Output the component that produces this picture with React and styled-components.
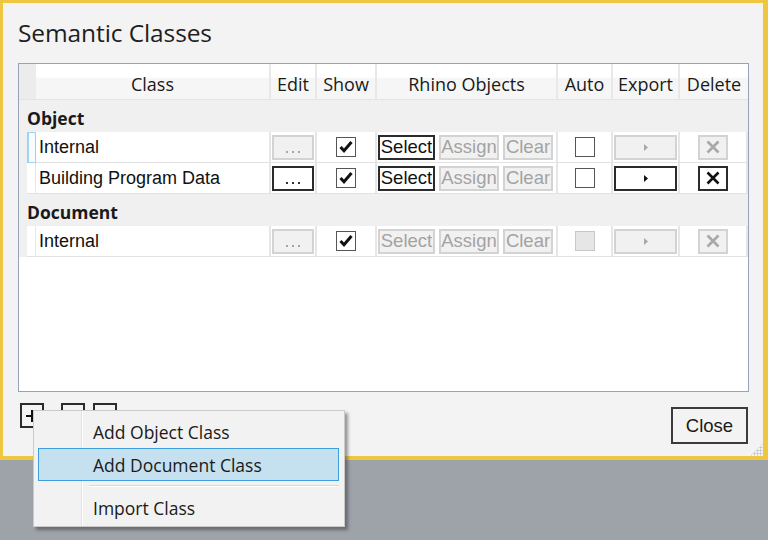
import React from "react"
import styled, { createGlobalStyle, css } from "styled-components"

const GlobalStyle = createGlobalStyle`
  html, body {
    margin: 0;
    padding: 0;
    background: #9ea3aa;
  }
  * {
    box-sizing: border-box;
  }
`

const COLS = "17px 235px 46px 60px 181px 55px 67px 68px"
const ROW_COLS = "8px 9px 235px 46px 60px 181px 55px 67px 68px"

const uiFont = `"Open Sans", "Noto Sans", sans-serif`
const cellFont = `"Liberation Sans", Arial, sans-serif`

const classes = {
  object: [
    { name: "Internal", enabled: false, current: true },
    { name: "Building Program Data", enabled: true },
  ],
  document: [{ name: "Internal", enabled: false, document: true }],
}

const CheckIcon = () => (
  <svg width="16" height="16" viewBox="0 0 16 16">
    <polyline points="2.5,8 6,11.8 13.5,3" fill="none" stroke="#111" strokeWidth="3" strokeLinejoin="miter" />
  </svg>
)

const CrossIcon = ({ color }) => (
  <svg width="14" height="14" viewBox="0 0 14 14">
    <path d="M1.5 1.5 L12.5 12.5 M12.5 1.5 L1.5 12.5" stroke={color} strokeWidth="2.6" />
  </svg>
)

const ArrowIcon = ({ color }) => (
  <svg width="6" height="9" viewBox="0 0 6 9">
    <polygon points="1,1 5,4.5 1,8" fill={color} />
  </svg>
)

const DotsIcon = ({ color }) => (
  <svg width="14" height="3" viewBox="0 0 14 3">
    <rect x="0" y="0" width="2" height="2" fill={color} />
    <rect x="6" y="0" width="2" height="2" fill={color} />
    <rect x="12" y="0" width="2" height="2" fill={color} />
  </svg>
)

const PlusIcon = () => (
  <svg width="16" height="16" viewBox="0 0 16 16">
    <path d="M8 2 V14 M2 8 H14" stroke="#111" strokeWidth="2" />
  </svg>
)

const ClassRow = ({ item }) => {
  const on = item.enabled
  const ink = on ? "#111" : "#a8a8a8"
  return (
    <DataRow>
      <Indent />
      <RowHeader $current={item.current} />
      <NameCell>{item.name}</NameCell>
      <Cell $center>
        <CellButton $on={on} $w={42}>
          <DotsSlot>
            <DotsIcon color={on ? "#333" : "#a6a6a6"} />
          </DotsSlot>
        </CellButton>
      </Cell>
      <Cell $center>
        <CheckBox>
          <CheckIcon />
        </CheckBox>
      </Cell>
      <RhinoCell>
        <CellButton $on={!item.document} $w={57}>Select</CellButton>
        <CellButton $w={60}>Assign</CellButton>
        <CellButton $w={50}>Clear</CellButton>
      </RhinoCell>
      <Cell $center>
        <CheckBox $disabled={item.document} />
      </Cell>
      <Cell $center>
        <CellButton $on={on} $w={63}>
          <ArrowIcon color={ink} />
        </CellButton>
      </Cell>
      <Cell $center>
        <CellButton $on={on} $w={30}>
          <CrossIcon color={ink} />
        </CellButton>
      </Cell>
    </DataRow>
  )
}

export default function App() {
  return (
    <Page>
      <GlobalStyle />
      <Dialog>
        <Title>Semantic Classes</Title>
        <Grid>
          <HeaderRow>
            <HeaderCorner />
            <HeaderCell>Class</HeaderCell>
            <HeaderCell>Edit</HeaderCell>
            <HeaderCell>Show</HeaderCell>
            <HeaderCell>Rhino Objects</HeaderCell>
            <HeaderCell>Auto</HeaderCell>
            <HeaderCell>Export</HeaderCell>
            <HeaderCell $last>Delete</HeaderCell>
          </HeaderRow>
          <GroupRow>Object</GroupRow>
          {classes.object.map((item, i) => (
            <ClassRow key={"o" + i} item={item} />
          ))}
          <GroupRow>Document</GroupRow>
          {classes.document.map((item, i) => (
            <ClassRow key={"d" + i} item={item} />
          ))}
        </Grid>
        <Footer>
          <ToolBar>
            <ToolButton>
              <PlusIcon />
            </ToolButton>
            <ToolButton $gap={17} />
            <ToolButton $gap={8} />
          </ToolBar>
          <CloseButton>Close</CloseButton>
        </Footer>
        <Grip />
        <Menu>
          <MenuItem>Add Object Class</MenuItem>
          <MenuItem $active>Add Document Class</MenuItem>
          <Separator />
          <MenuItem>Import Class</MenuItem>
        </Menu>
      </Dialog>
    </Page>
  )
}

const Page = styled.div`
  width: 768px;
  height: 540px;
  background: #9ea3aa;
  overflow: hidden;
`

const Dialog = styled.div`
  position: relative;
  height: 460px;
  background: #f3f3f3;
  border: 3px solid #efc63f;
  border-right-width: 5px;
  border-bottom-width: 4px;
  padding: 0 0 0 15px;
  display: flex;
  flex-direction: column;
`

const Title = styled.div`
  font-family: ${uiFont};
  font-size: 24.5px;
  letter-spacing: -0.1px;
  color: #1e1e1e;
  height: 60px;
  padding-top: 14px;
  line-height: 32px;
`

const Grid = styled.div`
  width: 731px;
  height: 329px;
  border: 1px solid #95a3b4;
  background: #ffffff;
  display: flex;
  flex-direction: column;
`

const HeaderRow = styled.div`
  display: grid;
  grid-template-columns: ${COLS};
  height: 36px;
  background: linear-gradient(#ffffff 0%, #ffffff 38%, #f6f6f6 40%, #f6f6f6 100%);
  border-bottom: 1px solid #e4e4e4;
`

const HeaderCorner = styled.div`
  background: #ececec;
`

const HeaderCell = styled.div`
  font-family: ${uiFont};
  font-size: 18px;
  color: #1a1a1a;
  display: flex;
  align-items: center;
  justify-content: center;
  border-right: ${(p) => (p.$last ? "none" : "2px solid #e8e8e8")};
  padding-top: 4px;
`

const GroupRow = styled.div`
  height: 32px;
  background: #f0f0f0;
  font-family: ${uiFont};
  font-weight: 700;
  font-size: 17.5px;
  color: #1a1a1a;
  display: flex;
  align-items: center;
  padding: 3px 0 0 8px;
`

const DataRow = styled.div`
  display: grid;
  grid-template-columns: ${ROW_COLS};
  height: 31px;
`

const Indent = styled.div`
  background: #f0f0f0;
`

const RowHeader = styled.div`
  background: #ffffff;
  border-bottom: 1px solid #e2e2e2;
  border-right: 1px solid #e6e6e6;
  ${(p) =>
    p.$current &&
    css`
      border: 1px solid #9fd3f3;
      border-left-width: 2px;
      background: #f7fbfe;
    `}
`

const Cell = styled.div`
  display: flex;
  align-items: center;
  justify-content: ${(p) => (p.$center ? "center" : "flex-start")};
  border-bottom: 1px solid #e2e2e2;
  border-right: 2px solid #e6e6e6;
  background: #ffffff;
`

const NameCell = styled(Cell)`
  font-family: ${cellFont};
  font-size: 18px;
  color: #111;
  padding: 1px 0 0 3px;
`

const RhinoCell = styled(Cell)`
  gap: 4px;
  padding-left: 1px;
`

const CellButton = styled.div`
  width: ${(p) => p.$w}px;
  height: 25px;
  flex: none;
  display: flex;
  align-items: center;
  justify-content: center;
  overflow: hidden;
  font-family: ${cellFont};
  font-size: 18.5px;
  white-space: nowrap;
  ${(p) =>
    p.$on
      ? css`
          background: #ffffff;
          border: 2px solid #2b2b2b;
          color: #111;
        `
      : css`
          background: #f1f1f1;
          border: 2px solid #d3d3d3;
          color: #a3a3a3;
        `}
`

const DotsSlot = styled.span`
  display: flex;
  padding-top: 10px;
`

const CheckBox = styled.div`
  width: 20px;
  height: 20px;
  border: 1px solid #555;
  background: ${(p) => (p.$disabled ? "#e6e6e6" : "#ffffff")};
  border-color: ${(p) => (p.$disabled ? "#c8c8c8" : "#555")};
  display: flex;
  align-items: center;
  justify-content: center;
`

const Footer = styled.div`
  flex: 1;
  display: flex;
  justify-content: space-between;
  align-items: flex-start;
  padding: 11px 15px 0 2px;
`

const ToolBar = styled.div`
  display: flex;
`

const ToolButton = styled.div`
  width: 24px;
  height: 25px;
  margin-left: ${(p) => p.$gap || 0}px;
  border: 2px solid #2b2b2b;
  background: #f3f3f3;
  display: flex;
  align-items: center;
  justify-content: center;
`

const CloseButton = styled.div`
  margin-top: 4px;
  width: 77px;
  height: 37px;
  border: 2px solid #3a3a3a;
  background: #f3f3f3;
  font-family: ${cellFont};
  font-size: 18.5px;
  color: #1a1a1a;
  display: flex;
  align-items: center;
  justify-content: center;
`

const Grip = styled.div`
  position: absolute;
  right: 0;
  bottom: 0;
  width: 13px;
  height: 13px;
  background-image: radial-gradient(circle, #b5b9c2 0.9px, transparent 1.1px);
  background-size: 3px 3px;
  clip-path: polygon(100% 0, 100% 100%, 0 100%);
`

const Menu = styled.div`
  position: absolute;
  left: 30px;
  top: 407px;
  width: 312px;
  height: 117px;
  background: #f2f2f2 linear-gradient(90deg, transparent 47px, #e2e2e2 47px, #e2e2e2 48px, #ffffff 48px, #ffffff 49px, transparent 49px);
  border: 1px solid #cacaca;
  box-shadow: 3px 3px 3px rgba(40, 40, 40, 0.45);
  padding: 4px 5px 0 4px;
  display: flex;
  flex-direction: column;
  z-index: 5;
`

const MenuItem = styled.div`
  height: 33px;
  display: flex;
  align-items: center;
  padding: 1px 0 0 54px;
  font-family: ${uiFont};
  font-size: 17.5px;
  color: #1a1a1a;
  border: 1px solid transparent;
  ${(p) =>
    p.$active &&
    css`
      background: #c5e1ef;
      border-color: #3f9fdc;
    `}
`

const Separator = styled.div`
  height: 1px;
  margin: 4px 0 4px 51px;
  background: #d9d9d9;
  border-bottom: 1px solid #ffffff;
  box-sizing: content-box;
`
